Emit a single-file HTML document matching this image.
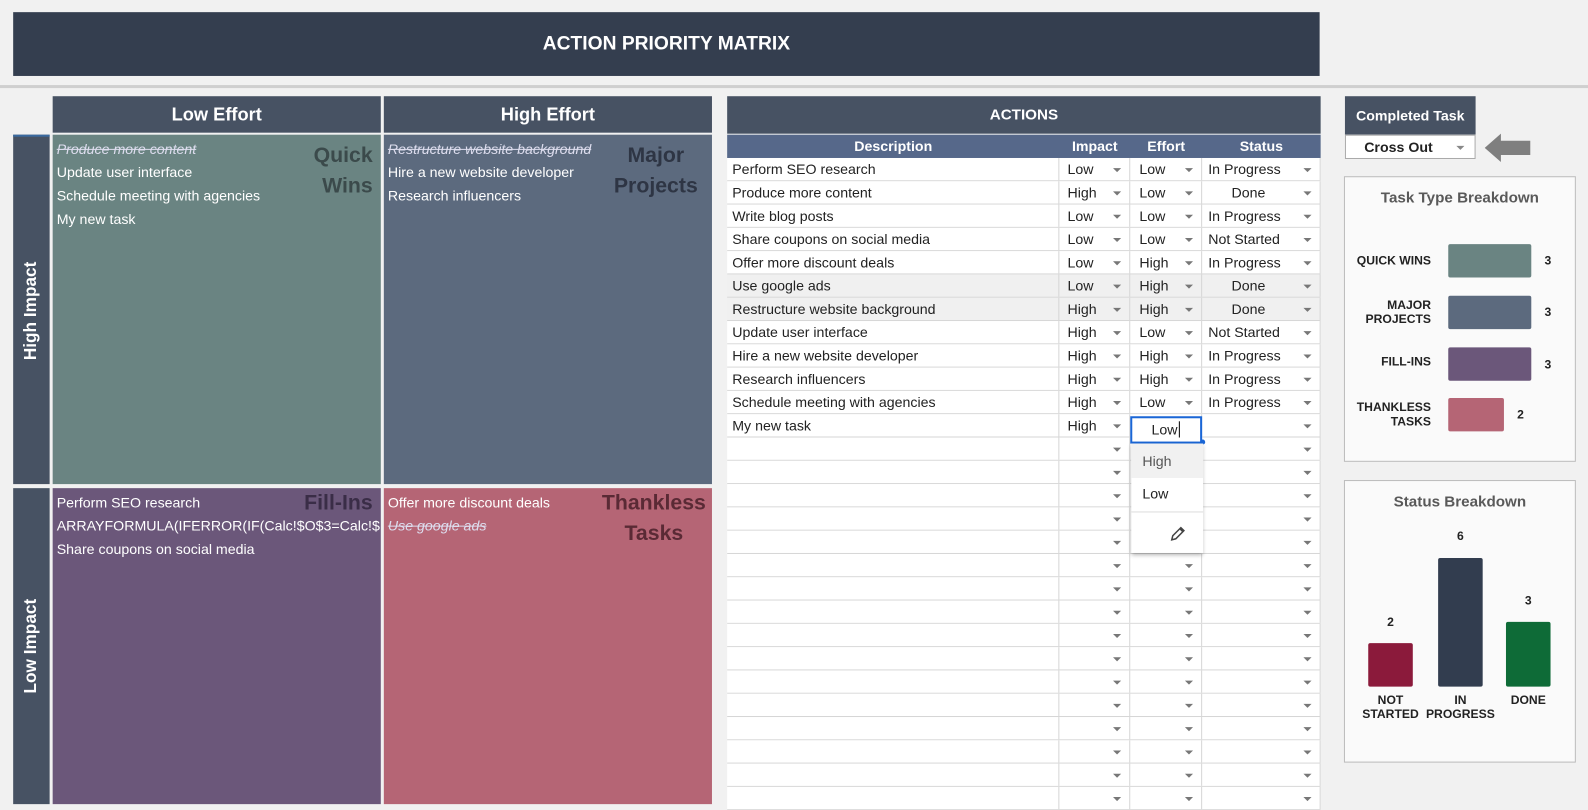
<!DOCTYPE html>
<html><head><meta charset="utf-8"><style>
*{margin:0;padding:0;box-sizing:border-box}
body{width:1588px;height:794px;overflow:hidden;background:#f1f1f1;font-family:"Liberation Sans",sans-serif;position:relative;font-size:14px;color:#222}
#w{position:absolute;left:0;top:0;width:1568px;height:784px;transform:scale(1.01276);transform-origin:0 0}
.a{position:absolute}
.hd{background:#475263;color:#fff;font-weight:bold;display:flex;align-items:center;justify-content:center}
.q{color:#fff;padding:3px 0 0 4px;line-height:23px;font-size:14px;overflow:hidden;white-space:nowrap}
.s{text-decoration:line-through;font-style:italic;color:#dde}
.big{position:absolute;font-weight:bold;font-size:21px;text-align:center;line-height:30px}
.row{position:absolute;left:718px;width:586px;height:23px;border-bottom:1px solid #d6d6d6;background:#fff;display:flex;line-height:22px}
.row div{border-right:1px solid #d6d6d6;height:22px;position:relative}
.c1{width:328px;padding-left:5px}
.c2{width:70px;padding-left:8px}
.c3{width:71px;padding-left:9px}
.c4{width:117px;padding-left:6px}
.c2:after,.c3:after,.c4:after{content:"";position:absolute;right:8px;top:10px;border-left:4px solid transparent;border-right:4px solid transparent;border-top:4px solid #777}
.lbl{position:absolute;font-weight:bold;font-size:12px;text-align:right;line-height:14px;color:#222}
</style></head><body><div id="w">
<div class="a" style="left:13px;top:12px;width:1290px;height:63px;background:#343e4f;color:#fff;font-weight:bold;font-size:19px;display:flex;align-items:center;justify-content:center">ACTION PRIORITY MATRIX</div>
<div class="a" style="left:0;top:84px;width:1568px;height:3px;background:#cfcfcf"></div>

<div class="a hd" style="left:52px;top:95px;width:324px;height:36px;font-size:18px">Low Effort</div>
<div class="a hd" style="left:379px;top:95px;width:324px;height:36px;font-size:18px">High Effort</div>
<div class="a hd" style="left:13px;top:133px;width:36px;height:345px;border-top:2px solid #3a6aa0"><div style="transform:rotate(-90deg);white-space:nowrap;font-size:17px">High Impact</div></div>
<div class="a hd" style="left:13px;top:482px;width:36px;height:312px"><div style="transform:rotate(-90deg);white-space:nowrap;font-size:17px">Low Impact</div></div>

<div class="a q" style="left:52px;top:133px;width:324px;height:345px;background:#6a8482"><span class="s">Produce more content</span><br>Update user interface<br>Schedule meeting with agencies<br>My new task
<div class="big" style="right:8px;top:6px;color:#3b4a4b;text-align:right">Quick<br>Wins</div></div>
<div class="a q" style="left:379px;top:133px;width:324px;height:345px;background:#5c6a7e"><span class="s">Restructure website background</span><br>Hire a new website developer<br>Research influencers
<div class="big" style="right:14px;top:6px;color:#2e3544">Major<br>Projects</div></div>
<div class="a q" style="left:52px;top:482px;width:324px;height:312px;background:#6b577a">Perform SEO research<br>ARRAYFORMULA(IFERROR(IF(Calc!$O$3=Calc!$<br>Share coupons on social media
<div class="big" style="right:8px;top:0px;color:#3a2d47">Fill-Ins</div></div>
<div class="a q" style="left:379px;top:482px;width:324px;height:312px;background:#b56575">Offer more discount deals<br><span class="s">Use google ads</span>
<div class="big" style="right:6px;top:0px;color:#5a2a35">Thankless<br>Tasks</div></div>

<div class="a hd" style="left:718px;top:95px;width:586px;height:37px;font-size:15px">ACTIONS</div>
<div class="a" style="left:718px;top:133px;width:586px;height:23px;background:#56688a;color:#fff;font-weight:bold;font-size:14px;display:flex;line-height:23px;text-align:center">
<div style="width:328px">Description</div><div style="width:70px">Impact</div><div style="width:71px">Effort</div><div style="width:117px">Status</div></div>

<div class="row" style="top:156px"><div class="c1">Perform SEO research</div><div class="c2">Low</div><div class="c3">Low</div><div class="c4">In Progress</div></div>
<div class="row" style="top:179px"><div class="c1">Produce more content</div><div class="c2">High</div><div class="c3">Low</div><div class="c4" style="padding-left:29px">Done</div></div>
<div class="row" style="top:202px"><div class="c1">Write blog posts</div><div class="c2">Low</div><div class="c3">Low</div><div class="c4">In Progress</div></div>
<div class="row" style="top:225px"><div class="c1">Share coupons on social media</div><div class="c2">Low</div><div class="c3">Low</div><div class="c4">Not Started</div></div>
<div class="row" style="top:248px"><div class="c1">Offer more discount deals</div><div class="c2">Low</div><div class="c3">High</div><div class="c4">In Progress</div></div>
<div class="row" style="top:271px;background:#f0f0f0"><div class="c1">Use google ads</div><div class="c2">Low</div><div class="c3">High</div><div class="c4" style="padding-left:29px">Done</div></div>
<div class="row" style="top:294px;background:#f0f0f0"><div class="c1">Restructure website background</div><div class="c2">High</div><div class="c3">High</div><div class="c4" style="padding-left:29px">Done</div></div>
<div class="row" style="top:317px"><div class="c1">Update user interface</div><div class="c2">High</div><div class="c3">Low</div><div class="c4">Not Started</div></div>
<div class="row" style="top:340px"><div class="c1">Hire a new website developer</div><div class="c2">High</div><div class="c3">High</div><div class="c4">In Progress</div></div>
<div class="row" style="top:363px"><div class="c1">Research influencers</div><div class="c2">High</div><div class="c3">High</div><div class="c4">In Progress</div></div>
<div class="row" style="top:386px"><div class="c1">Schedule meeting with agencies</div><div class="c2">High</div><div class="c3">Low</div><div class="c4">In Progress</div></div>
<div class="row" style="top:409px"><div class="c1">My new task</div><div class="c2">High</div><div class="c3"></div><div class="c4"></div></div>
<div class="row" style="top:432px"><div class="c1"></div><div class="c2"></div><div class="c3"></div><div class="c4"></div></div>
<div class="row" style="top:455px"><div class="c1"></div><div class="c2"></div><div class="c3"></div><div class="c4"></div></div>
<div class="row" style="top:478px"><div class="c1"></div><div class="c2"></div><div class="c3"></div><div class="c4"></div></div>
<div class="row" style="top:501px"><div class="c1"></div><div class="c2"></div><div class="c3"></div><div class="c4"></div></div>
<div class="row" style="top:524px"><div class="c1"></div><div class="c2"></div><div class="c3"></div><div class="c4"></div></div>
<div class="row" style="top:547px"><div class="c1"></div><div class="c2"></div><div class="c3"></div><div class="c4"></div></div>
<div class="row" style="top:570px"><div class="c1"></div><div class="c2"></div><div class="c3"></div><div class="c4"></div></div>
<div class="row" style="top:593px"><div class="c1"></div><div class="c2"></div><div class="c3"></div><div class="c4"></div></div>
<div class="row" style="top:616px"><div class="c1"></div><div class="c2"></div><div class="c3"></div><div class="c4"></div></div>
<div class="row" style="top:639px"><div class="c1"></div><div class="c2"></div><div class="c3"></div><div class="c4"></div></div>
<div class="row" style="top:662px"><div class="c1"></div><div class="c2"></div><div class="c3"></div><div class="c4"></div></div>
<div class="row" style="top:685px"><div class="c1"></div><div class="c2"></div><div class="c3"></div><div class="c4"></div></div>
<div class="row" style="top:708px"><div class="c1"></div><div class="c2"></div><div class="c3"></div><div class="c4"></div></div>
<div class="row" style="top:731px"><div class="c1"></div><div class="c2"></div><div class="c3"></div><div class="c4"></div></div>
<div class="row" style="top:754px"><div class="c1"></div><div class="c2"></div><div class="c3"></div><div class="c4"></div></div>
<div class="row" style="top:777px"><div class="c1"></div><div class="c2"></div><div class="c3"></div><div class="c4"></div></div>

<div class="a" style="left:1116px;top:411px;width:71px;height:27px;border:2px solid #1a66d6;background:#fff;padding-left:19px;line-height:23px">Low<span style="border-left:1px solid #000;margin-left:1px"></span></div>
<div class="a" style="left:1185px;top:434px;width:5px;height:5px;background:#1a66d6;border-radius:3px"></div>
<div class="a" style="left:1117px;top:438px;width:71px;height:108px;background:#fff;box-shadow:0 2px 4px rgba(0,0,0,.3)">
<div style="height:34px;background:#f1f1f1;line-height:34px;padding-left:11px;color:#555">High</div>
<div style="height:34px;line-height:30px;padding-left:11px;border-bottom:1px solid #ddd">Low</div>
<svg class="a" style="left:37px;top:80px" width="18" height="18" viewBox="0 0 18 18"><path d="M3 15 L4 11 L12 3 L15 6 L7 14 Z M11 4 L14 7" fill="none" stroke="#444" stroke-width="1.5"/></svg>
</div>

<div class="a hd" style="left:1328px;top:95px;width:129px;height:38px;font-size:14px">Completed Task</div>
<div class="a" style="left:1328px;top:133px;width:129px;height:24px;background:#fff;border:1px solid #aaa;font-weight:bold;line-height:22px;padding-left:18px">Cross Out<span style="position:absolute;right:10px;top:10px;border-left:4px solid transparent;border-right:4px solid transparent;border-top:4px solid #888"></span></div>
<svg class="a" style="left:1466px;top:130px" width="46" height="32"><path d="M0 16 L16 2 L16 9 L45 9 L45 23 L16 23 L16 30 Z" fill="#7f7f7f"/></svg>

<div class="a" style="left:1327px;top:174px;width:229px;height:282px;background:#fafafa;border:1px solid #bbb">
<div style="position:absolute;top:12px;width:100%;text-align:center;font-weight:bold;color:#595959;font-size:15px">Task Type Breakdown</div>
<div class="lbl" style="right:142px;top:75px">QUICK WINS</div>
<div class="a" style="left:102px;top:66px;width:82px;height:33px;background:#6a8482;border-radius:2px"></div><div class="a" style="left:197px;top:75px;font-size:12px;font-weight:bold">3</div>
<div class="lbl" style="right:142px;top:119px">MAJOR<br>PROJECTS</div>
<div class="a" style="left:102px;top:117px;width:82px;height:33px;background:#5c6a7e;border-radius:2px"></div><div class="a" style="left:197px;top:126px;font-size:12px;font-weight:bold">3</div>
<div class="lbl" style="right:142px;top:175px">FILL-INS</div>
<div class="a" style="left:102px;top:168px;width:82px;height:33px;background:#6b577a;border-radius:2px"></div><div class="a" style="left:197px;top:178px;font-size:12px;font-weight:bold">3</div>
<div class="lbl" style="right:142px;top:220px">THANKLESS<br>TASKS</div>
<div class="a" style="left:102px;top:218px;width:55px;height:33px;background:#b56575;border-radius:2px"></div><div class="a" style="left:170px;top:227px;font-size:12px;font-weight:bold">2</div>
</div>

<div class="a" style="left:1327px;top:474px;width:229px;height:279px;background:#fafafa;border:1px solid #bbb">
<div style="position:absolute;top:12px;width:100%;text-align:center;font-weight:bold;color:#595959;font-size:15px">Status Breakdown</div>
<div class="a" style="left:23px;top:160px;width:44px;height:43px;background:#8b1a3b;border-radius:2px"></div>
<div class="a" style="left:92px;top:76px;width:44px;height:127px;background:#323d4f;border-radius:2px"></div>
<div class="a" style="left:159px;top:139px;width:44px;height:64px;background:#0e6b37;border-radius:2px"></div>
<div class="a" style="left:23px;width:44px;top:132px;text-align:center;font-size:12px;font-weight:bold">2</div>
<div class="a" style="left:92px;width:44px;top:47px;text-align:center;font-size:12px;font-weight:bold">6</div>
<div class="a" style="left:159px;width:44px;top:111px;text-align:center;font-size:12px;font-weight:bold">3</div>
<div class="a" style="left:13px;width:64px;top:209px;text-align:center;font-size:12px;font-weight:bold;line-height:14px">NOT<br>STARTED</div>
<div class="a" style="left:78px;width:72px;top:209px;text-align:center;font-size:12px;font-weight:bold;line-height:14px">IN<br>PROGRESS</div>
<div class="a" style="left:150px;width:62px;top:209px;text-align:center;font-size:12px;font-weight:bold;line-height:14px">DONE</div>
</div>
</div></body></html>
